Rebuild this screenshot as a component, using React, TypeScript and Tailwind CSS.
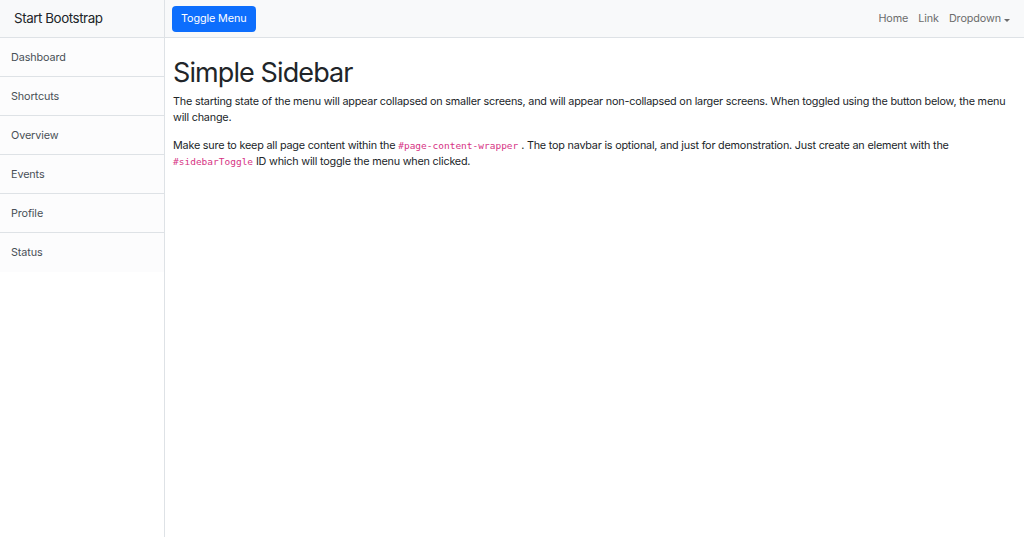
const links = ["Dashboard", "Shortcuts", "Overview", "Events", "Profile", "Status"];

const mono = { fontFamily: "'DejaVu Sans Mono', monospace" };

export default function App() {
  return (
    <div
      className="flex h-[537px] w-[1024px] overflow-hidden bg-white text-[#212529]"
      style={{ fontFamily: "Inter, 'Noto Sans', sans-serif" }}
    >
      {/* sidebar */}
      <div className="flex w-[165px] shrink-0 flex-col border-r border-[#dee2e6] bg-white">
        <div className="flex h-[38px] items-center border-b border-[#dee2e6] bg-[#f8f9fa] pl-[14px] text-[13.4px] tracking-[-0.45px]">
          Start Bootstrap
        </div>
        <div className="flex flex-col">
          {links.map((l) => (
            <div
              key={l}
              className="flex h-[39px] items-center border-b border-[#dee2e6] bg-[#fcfcfd] pl-[11px] pt-[2px] text-[10.8px] tracking-[-0.1px] text-[#495057] last:border-b-0"
            >
              {l}
            </div>
          ))}
        </div>
      </div>

      {/* page content */}
      <div className="flex min-w-0 flex-1 flex-col">
        <nav className="flex h-[38px] items-center justify-between border-b border-[#dee2e6] bg-[#f8f9fa] pl-[7px] pr-[14px]">
          <button className="h-[26px] rounded-[4px] bg-[#0d6efd] px-[9px] pt-[1px] text-[10.8px] tracking-[-0.1px] text-white">
            Toggle Menu
          </button>
          <div className="flex items-center gap-[10px] pt-[2px] text-[10.8px] tracking-[-0.1px] text-[#6c6c6c]">
            <span>Home</span>
            <span>Link</span>
            <span className="flex items-center gap-[3px]">
              Dropdown
              <span className="mt-[1px] h-0 w-0 border-x-[3px] border-t-[3.5px] border-x-transparent border-t-[#6c6c6c]" />
            </span>
          </div>
        </nav>
        <div className="pl-[8px] pr-[8px] pt-[18px]">
          <h1 className="text-[27px] font-normal leading-[34px] tracking-[-0.9px]">Simple Sidebar</h1>
          <p className="mt-[4px] text-[10.8px] leading-[16px] tracking-[-0.2px]">
            The starting state of the menu will appear collapsed on smaller screens, and will appear non-collapsed on
            larger screens. When toggled using the button below, the menu will change.
          </p>
          <p className="mt-[12px] text-[10.8px] leading-[16px] tracking-[-0.2px]">
            Make sure to keep all page content within the{" "}
            <code className="text-[9.5px] tracking-normal text-[#d63384]" style={mono}>
              #page-content-wrapper
            </code>{" "}
            . The top navbar is optional, and just for demonstration. Just create an element with the{" "}
            <code className="text-[9.5px] tracking-normal text-[#d63384]" style={mono}>
              #sidebarToggle
            </code>{" "}
            ID which will toggle the menu when clicked.
          </p>
        </div>
      </div>
    </div>
  );
}
